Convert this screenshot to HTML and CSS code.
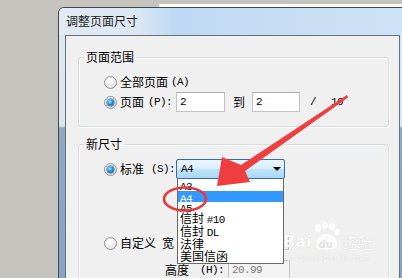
FILE: index.html
```html
<!DOCTYPE html>
<html lang="zh-CN">
<head>
    <meta charset="UTF-8" />
    <title>调整页面尺寸</title>
    <link rel="stylesheet" href="styles.css">
</head>
<body>
<div class="screen">
    <div class="topbar"><div class="topbar-line"></div></div>

    <div class="window">
        <div class="titlebar">调整页面尺寸</div>

        <div class="client">
            <!-- 页面范围 -->
            <fieldset class="group group-range">
                <legend>页面范围</legend>
                <div class="row">
                    <span class="radio"></span>
                    <span class="label">全部页面</span><span class="lat key-a">(A)</span>
                </div>
                <div class="row">
                    <span class="radio checked"></span>
                    <span class="label">页面</span><span class="lat key-p">(P):</span>
                    <input class="field field-from" type="text" value="2">
                    <span class="to">到</span>
                    <input class="field field-to" type="text" value="2">
                    <span class="lat slash">/</span>
                    <span class="lat total">10</span>
                </div>
            </fieldset>

            <!-- 新尺寸 -->
            <fieldset class="group group-size">
                <legend>新尺寸</legend>
                <div class="row">
                    <span class="radio checked"></span>
                    <span class="label">标准</span><span class="lat key-s">(S):</span>
                    <div class="select">
                        <span class="lat">A4</span>
                        <span class="caret"></span>
                    </div>
                </div>
                <div class="row row-custom">
                    <span class="radio"></span>
                    <span class="label">自定义</span>
                    <span class="label sub">宽</span>
                    <input class="field field-off field-width" type="text" value="">
                </div>
                <div class="row row-height">
                    <span class="label">高度</span><span class="lat key-h">(H):</span>
                    <input class="field field-off field-height" type="text" value="20.99" disabled>
                </div>
            </fieldset>
        </div>
    </div>

    <!-- opened dropdown of the select -->
    <ul class="droplist">
        <li class="item r12"><span class="lat">A3</span></li>
        <li class="item r11 active"><span class="lat">A4</span></li>
        <li class="item r10"><span class="lat">A5</span></li>
        <li class="item r12">信封 <span class="lat">#10</span></li>
        <li class="item r13">信封 <span class="lat">DL</span></li>
        <li class="item r13">法律</li>
        <li class="item r12">美国信函</li>
    </ul>

    <div class="watermark">
        <div class="wm-logo">
            <span class="wm-bai">Bai</span>
            <svg class="wm-paw" width="28" height="30" viewBox="0 0 28 30">
                <ellipse cx="6" cy="6" rx="3" ry="4" fill="#fbfbfb"/>
                <ellipse cx="13" cy="3.5" rx="3" ry="3.5" fill="#fbfbfb"/>
                <ellipse cx="20" cy="4.5" rx="3" ry="3.8" fill="#fbfbfb"/>
                <ellipse cx="25" cy="10" rx="2.6" ry="3.4" fill="#fbfbfb"/>
                <path d="M4 24 C4 15 10 12 14 12 C19 12 26 16 25 24 C24 29 4 29 4 24 Z" fill="#fbfbfb"/>
                <text x="6.5" y="26" font-family="DejaVu Sans" font-weight="bold" font-size="10" fill="#e2e2e2">du</text>
            </svg>
            <span class="wm-jy">经验</span>
        </div>
        <div class="wm-url">jingyan.baidu.com</div>
    </div>

    <!-- red annotation -->
    <svg class="marks" width="402" height="278" viewBox="0 0 402 278">
        <ellipse cx="185" cy="199" rx="21" ry="11.5" fill="none" stroke="#e8383a" stroke-width="2.6"/>
        <polygon points="347,95 241,165 222,157 217,186 250,182 245,171 348,97.5" fill="#ef3e3f"/>
    </svg>
</div>
</body>
</html>
```

FILE: styles.css
```css
/* Basis */
* {
    margin: 0;
    padding: 0;
    box-sizing: border-box;
}

body {
    background: #c5c4bf;
    font-family: "Noto Sans CJK SC", "Liberation Sans", sans-serif;
    font-size: 12px;
    color: #000;
}

.screen {
    position: relative;
    width: 402px;
    height: 278px;
    overflow: hidden;
    background: #c5c4bf;
}

/* Latin text in the half-width bitmap look */
.lat {
    font-family: "Liberation Mono", monospace;
    font-size: 11px;
    letter-spacing: -0.6px;
}

/* strip above the window */
.topbar {
    height: 7px;
    padding-top: 4px;
}

.topbar-line {
    margin-left: 159px;
    height: 3px;
    background: #fdfdfd;
}

/* Aero window */
.window {
    margin-left: 58px;
    width: 350px;
    height: 280px;
    border: 1px solid #3d4955;
    border-bottom: none;
    border-radius: 6px 0 0 0;
    padding-left: 6px;
    background: linear-gradient(180deg, #dde8f3 0, #d9e5f1 118px, #8fa8c3 120px, #8aa3bf 100%);
}

.titlebar {
    height: 27px;
    margin-left: -6px;
    padding: 6px 0 0 7px;
    line-height: 14px;
    color: #1a1a1a;
    border-radius: 5px 0 0 0;
    background: linear-gradient(90deg, #e2eaf2 0, #dbe7f3 80px, #bed9f4 115px, #c7ddf3 220px, #cfe3f7 100%);
}

.client {
    width: 335px;
    height: 260px;
    border: 1px solid #66717c;
    border-bottom: none;
    background: #f0f0f0;
    padding-top: 14px;
}

/* Group boxes */
.group {
    width: 311px;
    margin-left: 12px;
    border: 1px solid #d3dbe2;
    border-radius: 3px;
    box-shadow: inset 1px 1px 0 #fff, 1px 1px 0 #fff;
    min-width: 0;
}

.group legend {
    margin-left: 5px;
    padding: 0 2px;
    line-height: 14px;
    height: 14px;
}

.group-range {
    padding: 8px 0 14px 0;
}

.group-size {
    margin-top: 10px;
    height: 200px;
    padding: 8px 0 0 0;
}

.row {
    display: flex;
    align-items: center;
    height: 20px;
    padding-left: 25px;
    line-height: 14px;
    white-space: nowrap;
}

.label {
    margin-left: 3px;
}

.key-a { margin-left: 3px; }
.key-p { margin-left: 4px; }
.key-s { margin-left: 7px; }
.key-h { margin-left: 11px; }

.label.sub { margin-left: 6px; }

/* Win7 radio */
.radio {
    position: relative;
    width: 13px;
    height: 13px;
    border: 1px solid #8f9396;
    border-radius: 50%;
    background: radial-gradient(circle at 40% 35%, #ffffff 0, #f2f2f2 40%, #d4d4d4 100%);
    flex: none;
}

.radio.checked::after {
    content: "";
    position: absolute;
    left: 2px;
    top: 2px;
    width: 7px;
    height: 7px;
    border-radius: 50%;
    background: radial-gradient(circle at 40% 35%, #a9e4ff 0, #2f93d2 45%, #0f4f84 100%);
    box-shadow: 0 0 0 0.5px #1c5a8a;
}

/* text fields */
.field {
    height: 20px;
    border: 1px solid #c0c4c8;
    border-top-color: #aeb2b7;
    background: #fff;
    padding-left: 3px;
    font-family: "Liberation Mono", monospace;
    font-size: 11px;
    letter-spacing: -0.6px;
    color: #000;
    outline: none;
}

.field-from {
    width: 49px;
    margin-left: 4px;
}

.to {
    margin-left: 8px;
}

.field-to {
    width: 48px;
    margin-left: 7px;
}

.slash {
    margin-left: 10px;
}

.total {
    margin-left: 15px;
}

.field-off {
    background: #f4f4f4;
    border-color: #c2c2c2;
    color: #7a7a7a;
}

.row-custom {
    margin-top: 54px;
}

.field-width {
    width: 68px;
    height: 14px;
    margin-left: 47px;
}

.row-height {
    margin-top: 7px;
    padding-left: 86px;
}

.row-height .label {
    margin-left: 0;
}

.field-height {
    width: 62px;
    margin-left: 4px;
}

/* combo box */
.select {
    display: flex;
    align-items: center;
    width: 109px;
    height: 20px;
    margin-left: 1px;
    padding-left: 4px;
    border: 1px solid #3c6d95;
    border-radius: 2px;
    background: linear-gradient(180deg, #eaf5fd 0, #d9eefc 50%, #bee3f9 51%, #a9d8f6 100%);
}

.caret {
    margin-left: auto;
    margin-right: 3px;
    width: 0;
    height: 0;
    border-left: 4px solid transparent;
    border-right: 4px solid transparent;
    border-top: 4px solid #000;
}

/* open list lies over the dialog */
.droplist {
    position: absolute;
    left: 177px;
    top: 179px;
    width: 107px;
    list-style: none;
    background: #fff;
    border: 1px solid #6a6a6a;
    border-top: none;
    padding-bottom: 1px;
}

.item {
    padding-left: 2px;
    font-size: 12px;
    white-space: nowrap;
    overflow: visible;
}

.item.r10 { height: 10px; line-height: 10px; }
.item.r11 { height: 11px; line-height: 11px; }
.item.r12 { height: 12px; line-height: 12px; }
.item.r13 { height: 13px; line-height: 13px; }

.item.active {
    background: #3399ff;
    color: #fff;
}

.item .lat {
    font-size: 11px;
}

/* faint watermark */
.watermark {
    position: absolute;
    left: 283px;
    top: 222px;
    width: 94px;
}

.wm-logo {
    display: flex;
    align-items: flex-end;
    height: 30px;
}

.wm-bai {
    font-family: "DejaVu Sans", sans-serif;
    font-weight: bold;
    font-size: 16px;
    line-height: 18px;
    color: #fafafa;
    text-shadow: 0 0 1px #c8c8c8;
    margin-bottom: 1px;
}

.wm-paw {
    margin-left: 1px;
}

.wm-jy {
    margin-left: 2px;
    font-size: 15px;
    line-height: 18px;
    color: #fafafa;
    text-shadow: 0 0 1px #c8c8c8;
}

.wm-url {
    margin-top: 1px;
    padding-left: 4px;
    font-family: "DejaVu Sans", sans-serif;
    font-size: 9px;
    line-height: 10px;
    color: #f8f8f8;
    text-shadow: 0 0 1px #cfcfcf;
}

.marks {
    position: absolute;
    left: 0;
    top: 0;
}
```
